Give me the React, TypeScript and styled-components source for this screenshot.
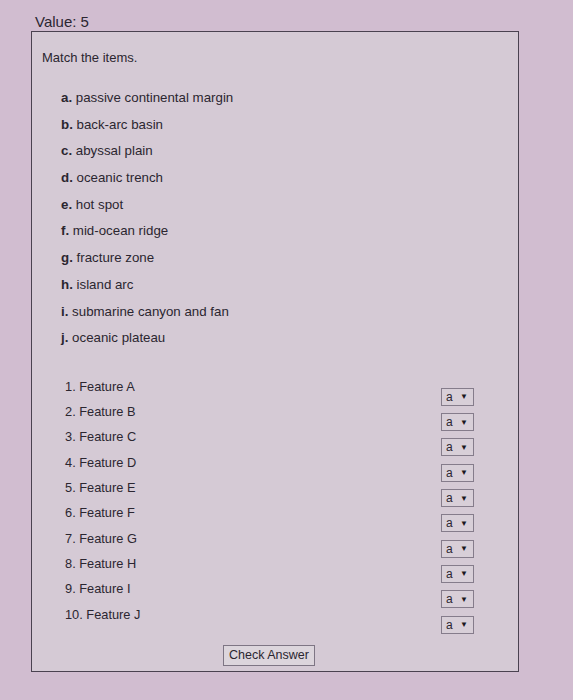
import styled, { createGlobalStyle } from "styled-components";

const terms = [
  ["a", "passive continental margin"],
  ["b", "back-arc basin"],
  ["c", "abyssal plain"],
  ["d", "oceanic trench"],
  ["e", "hot spot"],
  ["f", "mid-ocean ridge"],
  ["g", "fracture zone"],
  ["h", "island arc"],
  ["i", "submarine canyon and fan"],
  ["j", "oceanic plateau"],
];

const features = ["A", "B", "C", "D", "E", "F", "G", "H", "I", "J"];

export default function App() {
  return (
    <>
      <GlobalStyle />
      <Page>
        <ValueLabel>Value: 5</ValueLabel>
        <Panel>
          <Prompt>Match the items.</Prompt>
          <TermList>
            {terms.map(([letter, text]) => (
              <Term key={letter}>
                <b>{letter}.</b> {text}
              </Term>
            ))}
          </TermList>
          <FeatureList>
            {features.map((f, i) => (
              <FeatureRow key={f}>
                <FeatureLabel>
                  {i + 1}. Feature {f}
                </FeatureLabel>
                <SelectBox>
                  <span>a</span>
                  <Arrow>▼</Arrow>
                </SelectBox>
              </FeatureRow>
            ))}
          </FeatureList>
          <Footer>
            <CheckButton>Check Answer</CheckButton>
          </Footer>
        </Panel>
      </Page>
    </>
  );
}

const GlobalStyle = createGlobalStyle`
  body {
    margin: 0;
    background: #d1bdd0;
    font-family: "Liberation Sans", Arial, sans-serif;
    color: #2b2630;
  }
`;

const Page = styled.div`
  width: 573px;
  height: 700px;
  padding: 13px 0 0 31px;
  box-sizing: border-box;
`;

const ValueLabel = styled.div`
  font-size: 15px;
  line-height: 18px;
  padding-left: 4px;
`;

const Panel = styled.div`
  width: 488px;
  height: 641px;
  box-sizing: border-box;
  border: 1px solid #4a4250;
  background: #d5cad5;
  padding: 18px 0 0 10px;
  display: flex;
  flex-direction: column;
`;

const Prompt = styled.div`
  font-size: 13px;
  line-height: 16px;
`;

const TermList = styled.div`
  display: flex;
  flex-direction: column;
  margin: 19px 0 0 19px;
`;

const Term = styled.div`
  font-size: 13.3px;
  line-height: 26.7px;
  height: 26.7px;

  b {
    font-weight: bold;
  }
`;

const FeatureList = styled.div`
  display: flex;
  flex-direction: column;
  margin: 26px 0 0 23px;
  width: 409px;
`;

const FeatureRow = styled.div`
  height: 25.3px;
  display: flex;
  justify-content: space-between;
  align-items: flex-start;
`;

const FeatureLabel = styled.div`
  font-size: 12.8px;
  line-height: 18px;
`;

const SelectBox = styled.div`
  margin-top: 10px;
  width: 33px;
  height: 18px;
  box-sizing: border-box;
  border: 1px solid #857c8b;
  background: #d8cfd8;
  display: flex;
  align-items: center;
  justify-content: space-between;
  padding: 0 5px 0 4px;
  font-size: 12px;
`;

const Arrow = styled.span`
  font-size: 8px;
  color: #1c1820;
`;

const Footer = styled.div`
  display: flex;
  margin: 14px 0 0 181px;
`;

const CheckButton = styled.button`
  font-family: "Liberation Sans", Arial, sans-serif;
  font-size: 12.5px;
  color: #2b2630;
  background: #dcd5dc;
  border: 1px solid #7e7584;
  padding: 2px 5px;
  height: 21px;
`;
